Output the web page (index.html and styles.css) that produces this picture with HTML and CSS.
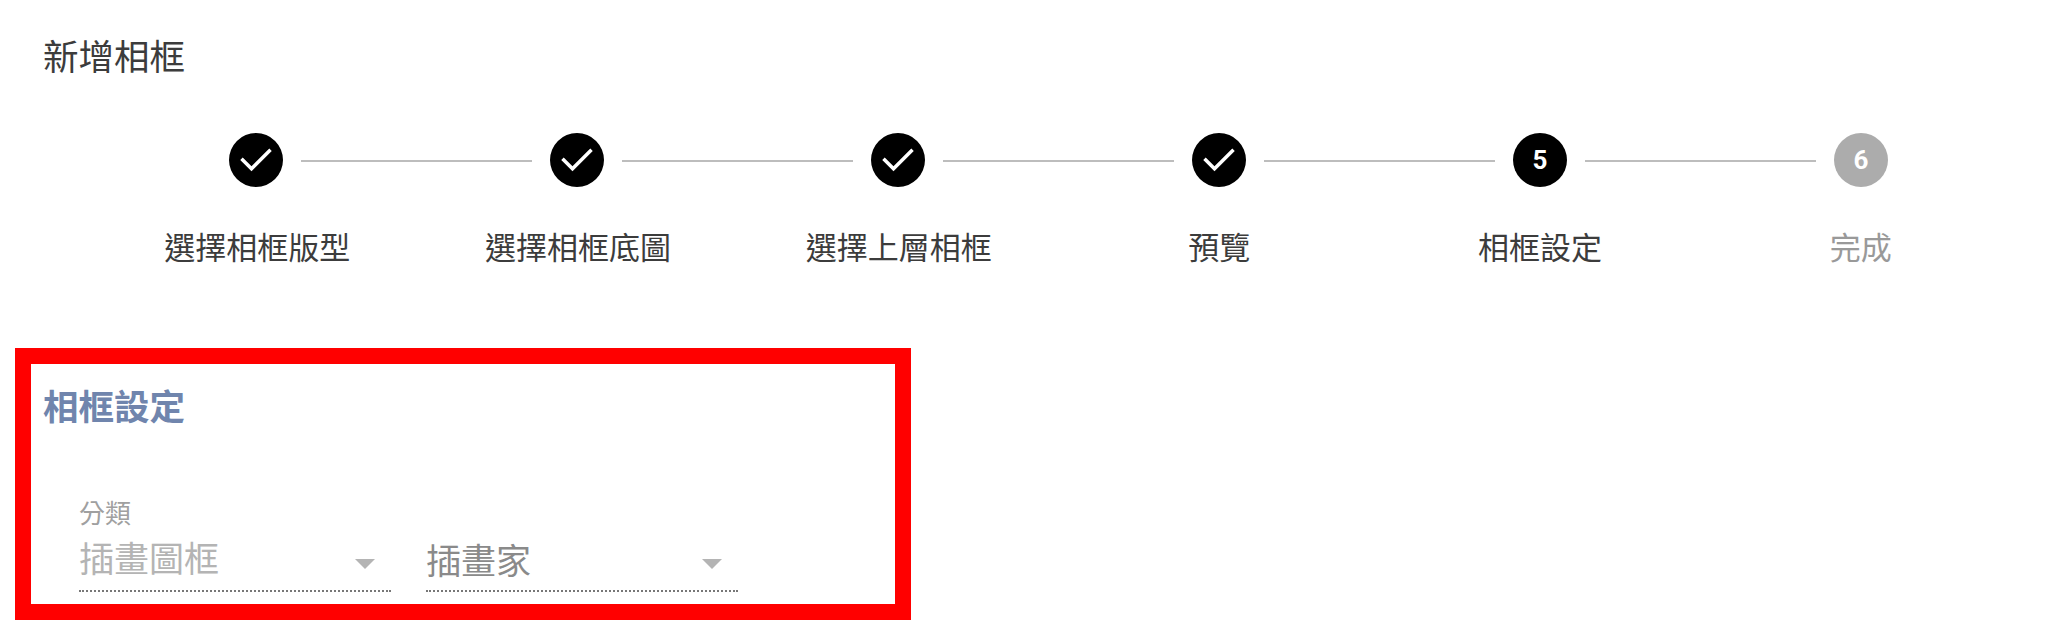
FILE: index.html
```html
<!DOCTYPE html>
<html lang="zh-Hant">
<head>
    <meta charset="UTF-8">
    <meta name="viewport" content="width=device-width, initial-scale=1.0">
    <title>新增相框</title>
    <link rel="stylesheet" href="styles.css">
</head>
<body>

<h1 class="page-title">新增相框</h1>

<div class="stepper">
    <div class="step-track">
        <svg class="step-icon" viewBox="0 0 24 24"><path d="M12 0a12 12 0 1 0 0 24 12 12 0 0 0 0-24zm-2 17l-5-5 1.100-1.100 3.900 3.900 7.900-7.900L19 8l-9 9z"/></svg>
        <div class="step-line"></div>
        <svg class="step-icon" viewBox="0 0 24 24"><path d="M12 0a12 12 0 1 0 0 24 12 12 0 0 0 0-24zm-2 17l-5-5 1.100-1.100 3.900 3.900 7.900-7.900L19 8l-9 9z"/></svg>
        <div class="step-line"></div>
        <svg class="step-icon" viewBox="0 0 24 24"><path d="M12 0a12 12 0 1 0 0 24 12 12 0 0 0 0-24zm-2 17l-5-5 1.100-1.100 3.900 3.900 7.900-7.900L19 8l-9 9z"/></svg>
        <div class="step-line"></div>
        <svg class="step-icon" viewBox="0 0 24 24"><path d="M12 0a12 12 0 1 0 0 24 12 12 0 0 0 0-24zm-2 17l-5-5 1.100-1.100 3.900 3.900 7.900-7.900L19 8l-9 9z"/></svg>
        <div class="step-line"></div>
        <div class="step-number">5</div>
        <div class="step-line"></div>
        <div class="step-number todo">6</div>
    </div>
    <div class="step-labels">
        <div class="step-label">選擇相框版型</div>
        <div class="step-label">選擇相框底圖</div>
        <div class="step-label">選擇上層相框</div>
        <div class="step-label">預覽</div>
        <div class="step-label">相框設定</div>
        <div class="step-label todo">完成</div>
    </div>
</div>

<section class="settings-box">
    <h2 class="settings-title">相框設定</h2>
    <div class="field-label">分類</div>
    <div class="field-row">
        <div class="select disabled">
            <span>插畫圖框</span>
            <i class="select-arrow"></i>
        </div>
        <div class="select">
            <span>插畫家</span>
            <i class="select-arrow"></i>
        </div>
    </div>
</section>

</body>
</html>
```

FILE: styles.css
```css
body {
    font-family: Roboto, "Noto Sans CJK TC", sans-serif;
    background-color: #fff;
    color: #3c3c3c;
    margin: 0;
    padding: 0;
}
.page-title {
    font-size: 35.5px;
    font-weight: 400;
    line-height: 40px;
    margin: 0;
    padding: 38px 0 0 43px;
}
.stepper {
    width: 1924px;
    margin: 55px 0 0 97px;
}
.step-track {
    display: flex;
    align-items: center;
    padding: 0 133px 0 132px;
}
.step-icon {
    display: block;
    width: 54px;
    height: 54px;
    flex: none;
}
.step-line {
    flex: 1;
    height: 2px;
    margin: 2px 18px 0;
    background-color: #bdbdbd;
}
.step-number {
    flex: none;
    width: 54px;
    height: 54px;
    border-radius: 50%;
    background-color: #000;
    color: #fff;
    font-size: 26px;
    font-weight: 700;
    display: flex;
    align-items: center;
    justify-content: center;
}
.step-number.todo {
    background-color: #acacac;
}
.step-labels {
    display: grid;
    grid-template-columns: repeat(6, 1fr);
    margin-top: 42px;
}
.step-label {
    font-size: 31px;
    line-height: 40px;
    text-align: center;
}
.step-label.todo {
    color: #999;
}
.settings-box {
    box-sizing: border-box;
    width: 896px;
    height: 272px;
    margin: 79px 0 0 15px;
    padding: 23px 12px 0;
    border: 16px solid #f00;
}
.settings-title {
    font-size: 35.5px;
    font-weight: 700;
    line-height: 42px;
    margin: 0;
    color: #7085ad;
}
.field-label {
    font-size: 26px;
    line-height: 32px;
    color: #a0a0a0;
    margin: 69px 0 0 36px;
}
.field-row {
    display: flex;
    gap: 35px;
    margin-left: 36px;
}
.select {
    width: 312px;
    height: 50px;
    margin-top: 10px;
    display: flex;
    justify-content: space-between;
    font-size: 35px;
    line-height: 42px;
    color: #8a8a8a;
    border-bottom: 2px dotted #777;
}
.select span {
    padding-top: 2px;
}
.select.disabled {
    color: #b4b4b4;
}
.select.disabled span {
    padding-top: 0;
}
.select-arrow {
    width: 0;
    height: 0;
    margin: 19px 16px 0 0;
    border-left: 10.500px solid transparent;
    border-right: 10.500px solid transparent;
    border-top: 10px solid #b4b4b4;
}
```
